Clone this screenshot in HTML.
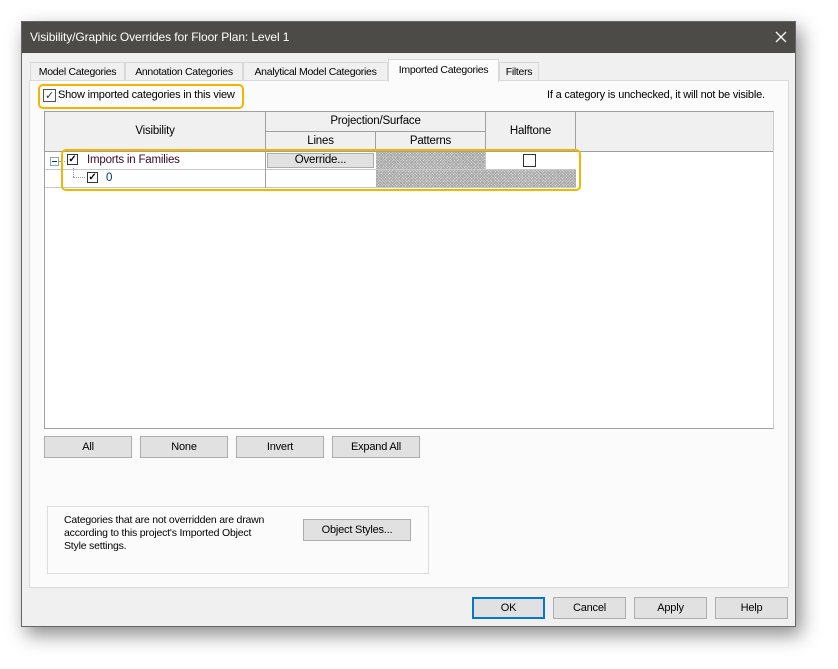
<!DOCTYPE html>
<html><head><meta charset="utf-8"><style>
*{box-sizing:border-box;margin:0;padding:0}
body{width:838px;height:669px;background:#fff;font-family:"Liberation Sans",sans-serif;font-size:11px;color:#000;position:relative;overflow:hidden;letter-spacing:-0.2px}
.a{position:absolute}
#dlg{left:21px;top:21px;width:775px;height:606px;background:#f0f0f0;border:1px solid #666;box-shadow:5px 8px 18px rgba(0,0,0,.45)}
#title{left:0;top:0;width:773px;height:31px;background:#4d4b48;color:#fff;font-size:12px;line-height:31px;padding-left:8px;letter-spacing:-0.1px}
.tab{top:40px;height:19px;border:1px solid #d9d9d9;border-bottom:none;background:#f0f0f0;line-height:18px;text-align:center;font-size:10.5px;letter-spacing:-0.3px;white-space:nowrap}
#panel{left:7px;top:58px;width:760px;height:508px;background:#fbfbfb;border:1px solid #dadada}
.btn{background:#e1e1e1;border:1px solid #adadad;text-align:center;font-size:11px}
.hl{border:2px solid #f5b400;border-radius:5px}
.hatch{background-color:#ddd;background-image:repeating-linear-gradient(45deg,#aaa 0 1px,transparent 1px 2px),repeating-linear-gradient(-45deg,#aaa 0 1px,transparent 1px 2px)}
.cb{width:11px;height:11px;border:1px solid #333;background:#fff;font-size:10px;line-height:9px;text-align:center;font-weight:bold}
.hd{background:#f0f0f0;border-right:1px solid #a0a0a0;border-bottom:1px solid #a0a0a0;text-align:center;font-size:11.5px}
</style></head><body>
<div id="dlg" class="a">
 <div id="title" class="a">Visibility/Graphic Overrides for Floor Plan: Level 1</div>
 <svg class="a" style="left:753px;top:9px" width="12" height="12"><path d="M1 1L11 11M11 1L1 11" stroke="#fff" stroke-width="1.3"/></svg>
 <div class="a tab" style="left:8px;width:95px">Model Categories</div>
 <div class="a tab" style="left:103px;width:118px">Annotation Categories</div>
 <div class="a tab" style="left:221px;width:145px">Analytical Model Categories</div>
 <div class="a tab" style="left:477px;width:40px">Filters</div>
 <div id="panel" class="a"></div>
 <div class="a tab" style="left:366px;top:37px;width:111px;height:23px;background:#fbfbfb;z-index:2;line-height:20px">Imported Categories</div>
</div>
<div class="a cb" style="left:43px;top:89px;width:13px;height:13px;border-color:#555;color:#333;line-height:12px;font-weight:normal;font-size:11px">✓</div>
<div class="a" style="left:58px;top:89px;font-size:11px">Show imported categories in this view</div>
<div class="a hl" style="left:38px;top:84px;width:206px;height:25px"></div>
<div class="a" style="left:547px;top:89px">If a category is unchecked, it will not be visible.</div>

<div class="a" style="left:44px;top:111px;width:730px;height:318px;background:#fff;border:1px solid #a0a0a0;border-right:1px solid #ccc"></div>
<div class="a hd" style="left:45px;top:112px;width:221px;height:40px;line-height:39px">Visibility</div>
<div class="a hd" style="left:266px;top:112px;width:220px;height:20px;line-height:19px">Projection/Surface</div>
<div class="a hd" style="left:266px;top:132px;width:110px;height:20px;line-height:19px">Lines</div>
<div class="a hd" style="left:376px;top:132px;width:110px;height:20px;line-height:19px">Patterns</div>
<div class="a hd" style="left:486px;top:112px;width:90px;height:40px;line-height:39px">Halftone</div>
<div class="a hd" style="left:576px;top:112px;width:197px;height:40px;border-right:none"></div>
<div class="a" style="left:45px;top:169px;width:531px;height:1px;background:#c8c8c8"></div>
<div class="a" style="left:45px;top:187px;width:531px;height:1px;background:#c8c8c8"></div>
<div class="a" style="left:265px;top:152px;width:1px;height:36px;background:#a0a0a0"></div>
<div class="a" style="left:485px;top:152px;width:1px;height:18px;background:#c8c8c8"></div>
<div class="a" style="left:50px;top:157px;width:9px;height:9px;border:1px solid #8aa;background:#fff"><div class="a" style="left:1px;top:3px;width:5px;height:1px;background:#036"></div></div>
<div class="a" style="left:59px;top:161px;width:6px;border-top:1px dotted #999"></div>
<div class="a cb" style="left:67px;top:154px">✓</div>
<div class="a" style="left:87px;top:154px;font-size:11.5px;color:#3a0a2a">Imports in Families</div>
<div class="a" style="left:73px;top:168px;height:9px;border-left:1px dotted #999"></div>
<div class="a" style="left:73px;top:177px;width:12px;border-top:1px dotted #999"></div>
<div class="a cb" style="left:87px;top:172px">✓</div>
<div class="a" style="left:106px;top:172px;font-size:11.5px;color:#036">0</div>
<div class="a btn" style="left:267px;top:153px;width:107px;height:15px;line-height:13px;font-size:11.5px">Override...</div>
<div class="a hatch" style="left:376px;top:152px;width:109px;height:17px"></div>
<div class="a hatch" style="left:376px;top:170px;width:200px;height:17px"></div>
<div class="a" style="left:523px;top:154px;width:13px;height:13px;border:1px solid #333;background:#fff"></div>
<div class="a hl" style="left:61px;top:149px;width:520px;height:42px"></div>

<div class="a btn" style="left:44px;top:436px;width:88px;height:22px;line-height:20px">All</div>
<div class="a btn" style="left:140px;top:436px;width:88px;height:22px;line-height:20px">None</div>
<div class="a btn" style="left:236px;top:436px;width:88px;height:22px;line-height:20px">Invert</div>
<div class="a btn" style="left:332px;top:436px;width:88px;height:22px;line-height:20px">Expand All</div>

<div class="a" style="left:47px;top:506px;width:382px;height:68px;border:1px solid #dcdcdc;background:#fbfbfb"></div>
<div class="a" style="left:64px;top:514px;line-height:13px;font-size:10.5px">Categories that are not overridden are drawn<br>according to this project's Imported Object<br>Style settings.</div>
<div class="a btn" style="left:303px;top:519px;width:108px;height:22px;line-height:20px">Object Styles...</div>

<div class="a btn" style="left:472px;top:597px;width:73px;height:22px;line-height:19px;border:2px solid #0078d7">OK</div>
<div class="a btn" style="left:553px;top:597px;width:73px;height:22px;line-height:20px">Cancel</div>
<div class="a btn" style="left:634px;top:597px;width:73px;height:22px;line-height:20px">Apply</div>
<div class="a btn" style="left:715px;top:597px;width:73px;height:22px;line-height:20px">Help</div>
</body></html>
